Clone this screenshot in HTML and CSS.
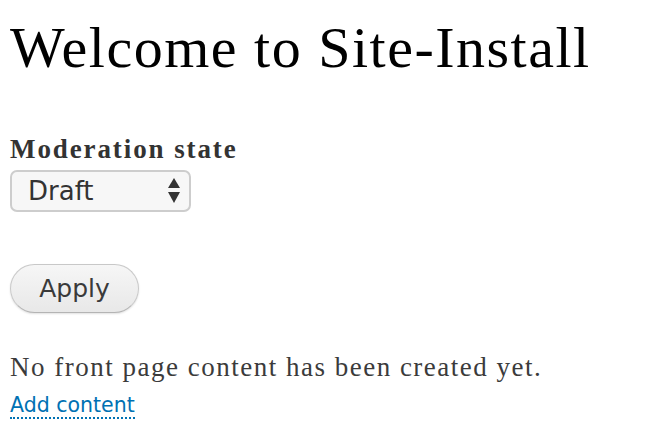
FILE: index.html
```html
<!DOCTYPE html>
<html>
<head>
<meta charset="utf-8">
<link rel="stylesheet" href="styles.css">
</head>
<body>
<main class="page">
  <h1 class="title">Welcome to Site-Install</h1>
  <form class="filters">
    <div class="field">
      <label class="label" for="state">Moderation state</label>
      <div class="select-wrap">
        <select id="state" class="select">
          <option>Draft</option>
        </select>
        <svg class="arrows" width="14" height="26" viewBox="0 0 14 26">
          <path d="M7 0 L13 10 L1 10 Z" fill="#333"/>
          <path d="M1 14 L13 14 L7 25 Z" fill="#333"/>
        </svg>
      </div>
    </div>
    <div class="actions">
      <button type="button" class="button">Apply</button>
    </div>
  </form>
  <p class="empty">No front page content has been created yet.</p>
  <a class="link" href="#">Add content</a>
</main>
</body>
</html>
```
FILE: styles.css
```css
html, body {
  margin: 0;
  padding: 0;
  background: #fff;
}
.page {
  padding: 0 10px;
  font-family: "Liberation Serif", serif;
  color: #3b3b3b;
}
.title {
  margin: 0;
  padding-top: 14px;
  font-size: 58px;
  font-weight: normal;
  line-height: 68px;
  letter-spacing: 1.5px;
  color: #000;
}
.filters {
  margin-top: 52px;
}
.field {
  display: flex;
  flex-direction: column;
  align-items: flex-start;
}
.label {
  font-size: 27px;
  font-weight: bold;
  line-height: 30px;
  letter-spacing: 1.9px;
  color: #333;
}
.select-wrap {
  position: relative;
  margin-top: 6px;
}
.select {
  -webkit-appearance: none;
  appearance: none;
  width: 181px;
  height: 42px;
  box-sizing: border-box;
  border: 2px solid #cdcdcd;
  border-radius: 7px;
  background: #f7f7f7;
  font-family: "DejaVu Sans", sans-serif;
  font-size: 26px;
  color: #333;
  padding: 0 0 0 16px;
  margin: 0;
}
.arrows {
  position: absolute;
  right: 10px;
  top: 8px;
  pointer-events: none;
}
.actions {
  margin-top: 52px;
}
.button {
  width: 129px;
  height: 49px;
  box-sizing: border-box;
  border: 1px solid #c8c8c8;
  border-bottom-color: #b4b4b4;
  border-radius: 25px;
  background: linear-gradient(#f6f6f6, #e8e8e8);
  box-shadow: 0 1px 2px rgba(0,0,0,0.12);
  font-family: "DejaVu Sans", sans-serif;
  font-size: 25px;
  color: #3a3a3a;
  padding: 0;
  margin: 0;
}
.empty {
  margin: 37px 0 0;
  font-size: 27px;
  line-height: 34px;
  letter-spacing: 1.5px;
}
.link {
  display: inline-block;
  margin-top: 9px;
  font-family: "DejaVu Sans", sans-serif;
  font-size: 20.5px;
  line-height: 24px;
  color: #0071b3;
  text-decoration: none;
  border-bottom: 2px dotted #0071b3;
}
```
